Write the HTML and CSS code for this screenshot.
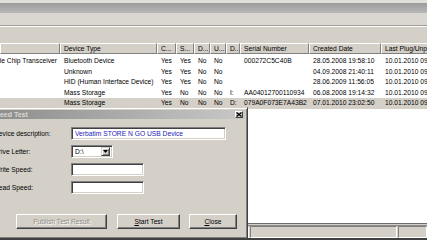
FILE: index.html
```html
<!DOCTYPE html>
<html>
<head>
<meta charset="utf-8">
<link rel="stylesheet" href="styles.css">
</head>
<body>
<div class="app">
  <div class="strip"></div>
  <div class="caption"></div>
  <div class="menuband"></div>
  <div class="sep"></div>
  <div class="toolband"></div>
  <div class="list">
    <div class="cols lv-head">
      <div class="hd">Device Name</div>
      <div class="hd">Device Type</div>
      <div class="hd">C...</div>
      <div class="hd">S...</div>
      <div class="hd">D...</div>
      <div class="hd">U...</div>
      <div class="hd">D..</div>
      <div class="hd">Serial Number</div>
      <div class="hd">Created Date</div>
      <div class="hd">Last Plug/Unplug Date</div>
    </div>
    <div class="lv-body">
      <div class="cols row">
        <span class="c0">Bluetooth Single Chip Transceiver</span><span>Bluetooth Device</span><span>Yes</span><span>Yes</span><span>No</span><span>No</span><span></span><span>000272C5C40B</span><span>28.05.2008 19:58:10</span><span>10.01.2010 09:12:44</span>
      </div>
      <div class="cols row">
        <span class="c0"></span><span>Unknown</span><span>Yes</span><span>Yes</span><span>No</span><span>No</span><span></span><span></span><span>04.09.2008 21:40:11</span><span>10.01.2010 09:12:44</span>
      </div>
      <div class="cols row">
        <span class="c0"></span><span>HID (Human Interface Device)</span><span>Yes</span><span>Yes</span><span>No</span><span>No</span><span></span><span></span><span>28.06.2009 11:56:05</span><span>10.01.2010 09:12:44</span>
      </div>
      <div class="cols row">
        <span class="c0"></span><span>Mass Storage</span><span>Yes</span><span>No</span><span>No</span><span>No</span><span>I:</span><span>AA04012700110934</span><span>06.08.2008 19:14:32</span><span>10.01.2010 09:12:44</span>
      </div>
      <div class="cols row sel">
        <span class="c0"></span><span>Mass Storage</span><span>Yes</span><span>No</span><span>No</span><span>No</span><span>D:</span><span>079A0F073E7A43B2</span><span>07.01.2010 23:02:50</span><span>10.01.2010 09:12:44</span>
      </div>
    </div>
  </div>
  <div class="sep2"></div>
  <div class="status">
    <div class="panel p0"></div>
    <div class="panel p1"></div>
    <div class="panel p2"></div>
  </div>
  <div class="bottom"></div>
</div>

<div class="dialog">
  <div class="dlg-title">
    <span class="dlg-caption">Speed Test</span>
    <span class="xbtn"><svg width="6" height="5" viewBox="0 0 6 5"><path d="M0.5 0.5 L5.5 4.5 M5.5 0.5 L0.5 4.5" stroke="#000" stroke-width="1.3" fill="none"/></svg></span>
  </div>
  <div class="dlg-body">
    <div class="form">
      <label class="lbl">Device description:</label>
      <div class="tb tb-desc">Verbatim STORE N GO USB Device</div>
      <label class="lbl">Drive Letter:</label>
      <div class="tb combo"><span class="combo-val">D:\</span><span class="dd"><svg width="5" height="3" viewBox="0 0 5 3"><path d="M0 0 H5 L2.5 3 Z" fill="#000"/></svg></span></div>
      <label class="lbl">Write Speed:</label>
      <div class="tb tb-speed"></div>
      <label class="lbl">Read Speed:</label>
      <div class="tb tb-speed"></div>
    </div>
    <div class="buttons">
      <div class="btn btn-publish disabled">Publish Test Result</div>
      <div class="btn btn-start"><u>S</u>tart Test</div>
      <div class="btn btn-close"><u>C</u>lose</div>
    </div>
  </div>
</div>
</body>
</html>
```

FILE: styles.css
```css
* { box-sizing: border-box; }
html, body { margin: 0; padding: 0; }
body {
  width: 427px;
  height: 240px;
  overflow: hidden;
  position: relative;
  background: #d4d0c8;
  font-family: "Liberation Sans", Arial, sans-serif;
  font-size: 6.7px;
  color: #000;
}

.app { display: flex; flex-direction: column; height: 240px; }
.strip { height: 3px; background: #e2e0db; }
.caption { height: 10px; background: linear-gradient(#9c9c9c, #b8b8b8); }
.menuband { height: 12px; background: #dad7d1; }
.sep { height: 2px; border-top: 1px solid #a09d96; border-bottom: 1px solid #fff; }
.toolband { height: 16px; background: #d4d0c8; }

.list { height: 180px; background: #fff; overflow: hidden; }
.cols {
  display: grid;
  grid-template-columns: 60px 97px 19px 18px 16px 16px 14px 69px 72px 120px;
  width: 501px;
}
.lv-head { height: 11px; background: #d4d0c8; }
.hd {
  border-left: 1px solid #fff;
  border-top: 1px solid #fff;
  border-right: 1px solid #808080;
  border-bottom: 1px solid #808080;
  padding-left: 3px;
  line-height: 9px;
  white-space: nowrap;
  overflow: hidden;
}
.lv-head .hd:first-child { color: transparent; }
.lv-body { padding-top: 2px; }
.row { height: 10.5px; line-height: 10.5px; }
.row > span { padding-left: 4px; white-space: nowrap; overflow: hidden; }
.row > span.c0 { display: flex; justify-content: flex-end; padding-left: 0; padding-right: 3px; }
.row.sel { background: #d4d0c8; }

.sep2 { height: 3px; border-top: 1px solid #6c6c6c; border-bottom: 1px solid #8a8a8a; }
.status { height: 12px; display: flex; gap: 1px; padding-left: 150px; }
.panel { height: 12px; border: 1px solid; border-color: #808080 #fff #fff #808080; }
.p0 { width: 99px; }
.p1 { width: 147px; }
.p2 { flex: 1; }
.bottom { height: 2px; background: #404040; }

/* dialog window */
.dialog {
  position: absolute;
  left: -13px;
  top: 107px;
  width: 261px;
  height: 132px;
  background: #d4d0c8;
  border: 1px solid;
  border-color: #d4d0c8 #404040 #404040 #d4d0c8;
  box-shadow: inset 1px 1px #fff, inset -1px -1px #808080;
  padding: 2px;
  display: flex;
  flex-direction: column;
}
.dlg-title {
  height: 9px;
  background: linear-gradient(to right, #8c8c8c, #c8c8c8);
  display: flex;
  align-items: center;
  padding-left: 1px;
  padding-right: 2px;
}
.dlg-caption {
  font-weight: bold;
  font-size: 7px;
  line-height: 9px;
  color: #dcd9d3;
  white-space: nowrap;
}
.xbtn {
  margin-left: auto;
  width: 8px;
  height: 7px;
  background: #d4d0c8;
  border: 1px solid;
  border-color: #fff #404040 #404040 #fff;
  display: flex;
  align-items: center;
  justify-content: center;
}
.xbtn svg { display: block; }

.dlg-body { padding: 8px 0 0 4px; }
.form {
  display: grid;
  grid-template-columns: 77px auto;
  grid-auto-rows: 13px;
  row-gap: 5px;
  align-items: center;
  justify-items: start;
}
.lbl { white-space: nowrap; }
.tb {
  height: 13px;
  background: #fff;
  border: 1px solid;
  border-color: #808080 #fff #fff #808080;
  box-shadow: inset 1px 1px #404040, inset -1px -1px #d4d0c8;
  padding: 0 3px;
  line-height: 11px;
  white-space: nowrap;
}
.tb-desc { width: 155px; color: #1c1cb8; }
.tb-speed { width: 73px; }
.combo { width: 42px; display: flex; align-items: center; padding: 2px 2px 2px 3px; }
.combo-val { line-height: 9px; }
.dd {
  margin-left: auto;
  width: 9px;
  height: 9px;
  background: #d4d0c8;
  border: 1px solid;
  border-color: #d4d0c8 #404040 #404040 #d4d0c8;
  box-shadow: inset 1px 1px #fff, inset -1px -1px #808080;
  display: flex;
  align-items: center;
  justify-content: center;
}
.dd svg { display: block; }

.buttons {
  margin-top: 20px;
  display: flex;
  justify-content: flex-end;
  padding-right: 8px;
}
.btn {
  height: 15px;
  background: #d4d0c8;
  border: 1px solid;
  border-color: #fff #404040 #404040 #fff;
  box-shadow: inset -1px -1px #808080;
  display: flex;
  align-items: center;
  justify-content: center;
  white-space: nowrap;
}
.btn-publish { width: 91px; }
.btn-start { width: 63px; margin-left: 10px; }
.btn-close { width: 48px; margin-left: 9px; }
.btn.disabled { color: #8c8a85; text-shadow: 1px 1px #fff; }
```
